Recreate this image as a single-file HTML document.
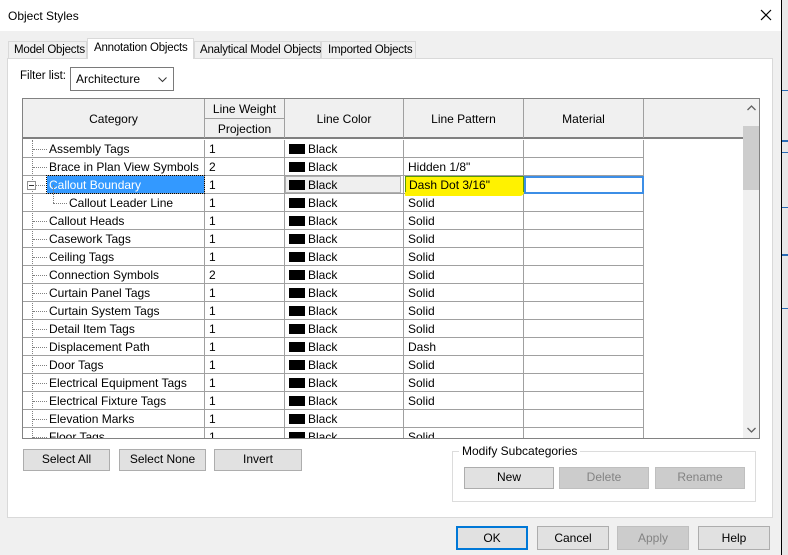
<!DOCTYPE html>
<html><head><style>
*{margin:0;padding:0;box-sizing:border-box}
body{width:788px;height:555px;position:relative;overflow:hidden;background:#f0f0f0;font-family:"Liberation Sans",sans-serif;font-size:12px;color:#000}
.a{position:absolute;white-space:nowrap}
.btn{position:absolute;background:#e1e1e1;border:1px solid #adadad;text-align:center;line-height:19px;font-size:12px}
.dis{background:#cccccc;border-color:#bfbfbf;color:#838383}
.c{position:absolute;height:18px;line-height:19px;border-right:1px solid #a0a0a0;border-bottom:1px solid #a0a0a0;white-space:nowrap;padding-left:4px;background:#fff}
.sw{display:inline-block;width:16px;height:10px;background:#000;vertical-align:-1px;margin-right:3px}
.dot{position:absolute;border-top:1px dotted #808080;width:12px}
.tab{position:absolute;white-space:nowrap;font-size:11.5px;letter-spacing:-0.2px}
</style></head><body>
<div class="a" style="left:781px;top:0;width:7px;height:555px;background:#e8e8e8;border-left:1px solid #000"></div>
<div class="a" style="left:782px;top:90px;width:6px;height:1px;background:#2a6db5"></div>
<div class="a" style="left:782px;top:140px;width:6px;height:2px;background:#2a6db5"></div>
<div class="a" style="left:782px;top:152px;width:6px;height:1px;background:#2a6db5"></div>
<div class="a" style="left:782px;top:207px;width:6px;height:1px;background:#2a6db5"></div>
<div class="a" style="left:782px;top:254px;width:6px;height:2px;background:#2a6db5"></div>
<div class="a" style="left:782px;top:308px;width:6px;height:1px;background:#2a6db5"></div>
<div class="a" style="left:0;top:0;width:781px;height:31px;background:#fff"></div>
<div class="a" style="left:8px;top:9px;font-size:12px">Object Styles</div>
<svg class="a" style="left:760px;top:9px" width="12" height="12"><path d="M1 1L11 11M11 1L1 11" stroke="#000" stroke-width="1.2"/></svg>
<div class="a" style="left:7px;top:58px;width:766px;height:460px;background:#fff;border:1px solid #d9d9d9"></div>
<div class="tab" style="left:8px;top:41px;width:79px;height:18px;border:1px solid #d9d9d9;background:#f0f0f0;padding-left:5px;line-height:16px">Model Objects</div>
<div class="tab" style="left:87px;top:38px;width:107px;height:21px;border:1px solid #d9d9d9;border-bottom:none;background:#fff;padding-left:6px;line-height:18px">Annotation Objects</div>
<div class="tab" style="left:194px;top:41px;width:127px;height:18px;border:1px solid #d9d9d9;background:#f0f0f0;padding-left:5px;line-height:16px">Analytical Model Objects</div>
<div class="tab" style="left:321px;top:41px;width:95px;height:18px;border:1px solid #d9d9d9;background:#f0f0f0;padding-left:6px;line-height:16px">Imported Objects</div>
<div class="a" style="left:20px;top:70px;font-size:11.5px">Filter list:</div>
<div class="a" style="left:70px;top:67px;width:104px;height:24px;border:1px solid #7a7a7a;background:#fff;padding-left:5px;line-height:22px">Architecture<svg style="position:absolute;right:6px;top:9px" width="9" height="6"><path d="M0.5 0.5L4.5 4.5L8.5 0.5" stroke="#333" fill="none"/></svg></div>
<div class="a" style="left:22px;top:98px;width:738px;height:341px;border:1px solid #828282;background:#fff;overflow:hidden">
<div class="a" style="left:0;top:0;width:721px;height:40px;background:#f0f0f0;border-bottom:2px solid #808080"></div>
<div class="a" style="left:0;top:0;width:182px;height:39px;border-right:1px solid #a0a0a0;text-align:center;line-height:40px">Category</div>
<div class="a" style="left:182px;top:0;width:80px;height:20px;border-right:1px solid #a0a0a0;border-bottom:1px solid #a0a0a0;text-align:center;line-height:20px">Line Weight</div>
<div class="a" style="left:182px;top:20px;width:80px;height:19px;border-right:1px solid #a0a0a0;text-align:center;line-height:20px">Projection</div>
<div class="a" style="left:262px;top:0;width:119px;height:39px;border-right:1px solid #a0a0a0;text-align:center;line-height:40px">Line Color</div>
<div class="a" style="left:381px;top:0;width:120px;height:39px;border-right:1px solid #a0a0a0;text-align:center;line-height:40px">Line Pattern</div>
<div class="a" style="left:501px;top:0;width:120px;height:39px;border-right:1px solid #a0a0a0;text-align:center;line-height:40px">Material</div>
<div class="a" style="left:9px;top:41px;height:300px;border-left:1px dotted #808080"></div>
<div id="rows"></div>
<div class="a" style="left:720px;top:0;width:17px;height:339px;background:#f0f0f0"></div>
<div class="a" style="left:720px;top:27px;width:16px;height:64px;background:#cdcdcd"></div>
<svg class="a" style="left:724px;top:6px" width="9" height="6"><path d="M0.5 5L4.5 1L8.5 5" stroke="#606060" fill="none" stroke-width="1.3"/></svg>
<svg class="a" style="left:724px;top:328px" width="9" height="6"><path d="M0.5 1L4.5 5L8.5 1" stroke="#606060" fill="none" stroke-width="1.3"/></svg>
</div>
<script>
var R=[["Assembly Tags","1",""],["Brace in Plan View Symbols","2","Hidden 1/8\""],["Callout Boundary","1","Dash Dot 3/16\""],["Callout Leader Line","1","Solid"],["Callout Heads","1","Solid"],["Casework Tags","1","Solid"],["Ceiling Tags","1","Solid"],["Connection Symbols","2","Solid"],["Curtain Panel Tags","1","Solid"],["Curtain System Tags","1","Solid"],["Detail Item Tags","1","Solid"],["Displacement Path","1","Dash"],["Door Tags","1","Solid"],["Electrical Equipment Tags","1","Solid"],["Electrical Fixture Tags","1","Solid"],["Elevation Marks","1",""],["Floor Tags","1","Solid"]];
var h="";
R.forEach(function(r,i){var t=41+i*18;var ind=i==3?20:0;
h+='<div class="c" style="left:0;top:'+t+'px;width:182px;padding-left:0;background:transparent"></div>';
if(i==3){h+='<div class="a" style="left:30px;top:'+(t-9)+'px;height:18px;border-left:1px dotted #808080"></div><div class="dot" style="left:30px;top:'+(t+9)+'px;width:14px"></div>';}
else h+='<div class="dot" style="left:10px;top:'+(t+9)+'px;width:14px"></div>';
if(i==2){h+='<div class="a" style="left:4px;top:'+(t+5)+'px;width:9px;height:9px;border:1px solid #919191;background:#fff"><div style="position:absolute;left:1px;top:3px;width:5px;height:1px;background:#333"></div></div>';
h+='<div class="a" style="left:24px;top:'+t+'px;width:157px;height:17px;background:#3399ff;color:#fff;padding-left:2px;line-height:18px;outline:1px dotted #000">'+r[0]+'</div>';}
else h+='<div class="a" style="left:'+(26+ind)+'px;top:'+t+'px;line-height:19px">'+r[0]+'</div>';
h+='<div class="c" style="left:182px;top:'+t+'px;width:80px">'+r[1]+'</div>';
h+='<div class="c" style="left:262px;top:'+t+'px;width:119px"><span class="sw"></span>Black</div>';
h+='<div class="c" style="left:381px;top:'+t+'px;width:120px">'+r[2]+'</div>';
h+='<div class="c" style="left:501px;top:'+t+'px;width:120px"></div>';
});
h+='<div class="a" style="left:262px;top:77px;width:116px;height:17px;background:#efefef;border:1px solid #b0b0b0;padding-left:3px;line-height:17px"><span class="sw"></span>Black</div>';
h+='<div class="a" style="left:382px;top:77px;width:119px;height:17px;background:#fff200;border:1px solid #5a9a00;padding-left:3px;line-height:16px">Dash Dot 3/16"</div>';
h+='<div class="a" style="left:382px;top:93px;width:119px;height:4px;background:#fff200;border-radius:0 0 60px 10px"></div>';
h+='<div class="a" style="left:501px;top:77px;width:120px;height:18px;border:2px solid #3c8ee6;background:#fff"></div>';
document.getElementById("rows").innerHTML=h;
</script>
<div class="btn" style="left:23px;top:449px;width:87px;height:22px">Select All</div>
<div class="btn" style="left:119px;top:449px;width:87px;height:22px">Select None</div>
<div class="btn" style="left:214px;top:449px;width:88px;height:22px">Invert</div>
<div class="a" style="left:452px;top:451px;width:304px;height:51px;border:1px solid #dcdcdc"></div>
<div class="a" style="left:459px;top:444px;background:#fff;padding:0 3px">Modify Subcategories</div>
<div class="btn" style="left:464px;top:467px;width:90px;height:22px">New</div>
<div class="btn dis" style="left:559px;top:467px;width:90px;height:22px">Delete</div>
<div class="btn dis" style="left:655px;top:467px;width:90px;height:22px">Rename</div>
<div class="btn" style="left:456px;top:526px;width:72px;height:24px;border:2px solid #0078d7;line-height:20px">OK</div>
<div class="btn" style="left:537px;top:526px;width:72px;height:24px;line-height:22px">Cancel</div>
<div class="btn dis" style="left:617px;top:526px;width:72px;height:24px;line-height:22px">Apply</div>
<div class="btn" style="left:698px;top:526px;width:72px;height:24px;line-height:22px">Help</div>
</body></html>
